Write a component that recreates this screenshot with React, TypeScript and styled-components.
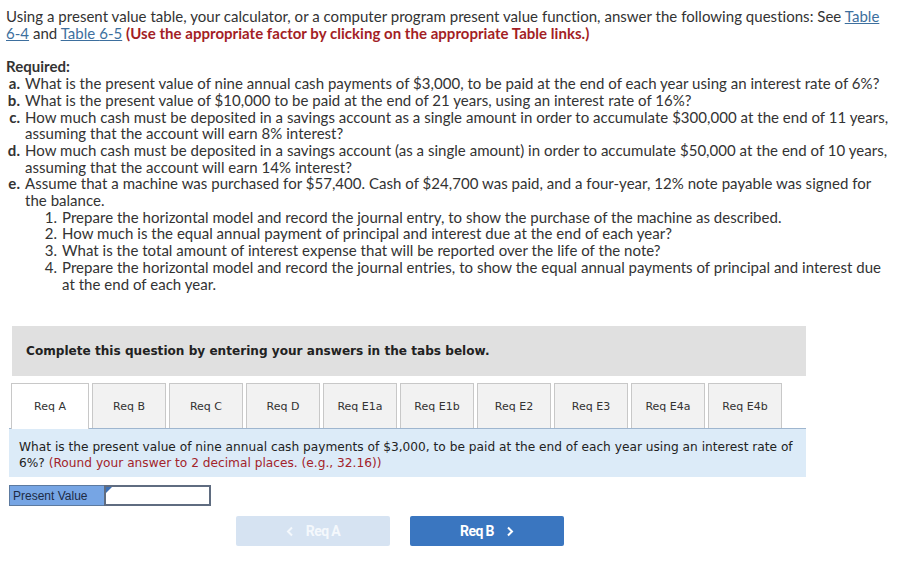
import React from 'react';
import styled, { createGlobalStyle } from 'styled-components';

const GlobalStyle = createGlobalStyle`
  body {
    margin: 0;
    background: #fff;
  }
`;

const Page = styled.div`
  width: 902px;
  padding: 8px 0 0 6px;
  box-sizing: border-box;
`;

const Prose = styled.div`
  font-family: Lato, 'Open Sans', sans-serif;
  font-size: 15px;
  letter-spacing: 0.03px;
  line-height: 16.7px;
  color: #333;
  padding-right: 6px;
`;

const Para = styled.p`
  margin: 0 0 17px;
`;

const Link = styled.a`
  color: #3d6f9e;
  text-decoration: underline;
`;

const NoWrap = styled.span`
  white-space: nowrap;
`;

const Note = styled.b`
  color: #a31e25;
`;

const Heading = styled.div`
  font-weight: bold;
`;

const Item = styled.div<{ $indent: number }>`
  display: flex;
  padding-left: ${(p) => p.$indent}px;
`;

const Marker = styled.span<{ $bold?: boolean; $w: number }>`
  flex: none;
  width: ${(p) => p.$w}px;
  box-sizing: border-box;
  text-align: right;
  padding-right: 5px;
  font-weight: ${(p) => (p.$bold ? 'bold' : 'normal')};
`;

const Panel = styled.div`
  margin: 34px 0 0 6px;
  width: 794px;
  height: 50px;
  background: #e0e0e0;
  display: flex;
  align-items: center;
  padding-left: 14px;
  box-sizing: border-box;
  font-family: 'DejaVu Sans', Verdana, sans-serif;
  font-size: 12.1px;
  font-weight: bold;
  color: #222;
`;

const TabRow = styled.div`
  margin: 7px 0 0 3px;
  width: 797px;
  display: flex;
  gap: 3px;
  padding-left: 2px;
  box-sizing: border-box;
  border-bottom: 1px solid #9fb6cf;
`;

const Tab = styled.div<{ $active?: boolean }>`
  width: ${(p) => (p.$active ? 78 : 74)}px;
  box-sizing: border-box;
  border: 1px solid #c8c8c8;
  border-bottom: none;
  background: ${(p) => (p.$active ? '#fff' : '#f2f2f2')};
  margin-bottom: ${(p) => (p.$active ? '-1px' : '0')};
  height: ${(p) => (p.$active ? 46 : 45)}px;
  display: flex;
  align-items: center;
  justify-content: center;
  font-family: 'DejaVu Sans', Verdana, sans-serif;
  font-size: 11px;
  color: #333;
`;

const Question = styled.div`
  margin-left: 3px;
  width: 797px;
  box-sizing: border-box;
  background: #dcebf8;
  padding: 10px 2px 6px 10px;
  font-family: 'DejaVu Sans', Verdana, sans-serif;
  font-size: 12.2px;
  line-height: 16px;
  color: #222;
`;

const Hint = styled.span`
  color: #a3232a;
`;

const AnswerRow = styled.div`
  margin: 8px 0 0 3px;
  display: flex;
  height: 21px;
`;

const Label = styled.div`
  width: 95px;
  box-sizing: border-box;
  background: #76a5e4;
  border: 1px solid #5c7aa0;
  border-right: none;
  display: flex;
  align-items: center;
  padding-left: 3px;
  font-family: 'Liberation Sans', Arial, sans-serif;
  font-size: 12px;
  color: #1d2b45;
`;

const InputBox = styled.div`
  position: relative;
  width: 107px;
  box-sizing: border-box;
  border: 2px solid #5f6c80;
  background: #fff;
`;

const Flag = styled.span`
  position: absolute;
  left: 0;
  top: 0;
  width: 0;
  height: 0;
  border-top: 6px solid #3c6fb4;
  border-right: 6px solid transparent;
`;

const NavRow = styled.div`
  margin: 10px 0 0 230px;
  display: flex;
  gap: 20px;
`;

const NavButton = styled.div<{ $disabled?: boolean }>`
  width: 154px;
  height: 30px;
  border-radius: 2px;
  background: ${(p) => (p.$disabled ? '#d6e3f2' : '#3a76c0')};
  color: ${(p) => (p.$disabled ? '#f4f8fc' : '#fff')};
  display: flex;
  align-items: center;
  justify-content: center;
  gap: 12px;
  font-family: Roboto, 'Liberation Sans', sans-serif;
  font-weight: bold;
  font-size: 14px;
  letter-spacing: -0.6px;
`;

const Chevron: React.FC<{ dir: 'left' | 'right' }> = ({ dir }) => (
  <svg width="8" height="11" viewBox="0 0 8 11">
    <path
      d={dir === 'left' ? 'M6 1.5 L2 5.5 L6 9.5' : 'M2 1.5 L6 5.5 L2 9.5'}
      fill="none"
      stroke="currentColor"
      strokeWidth="2"
    />
  </svg>
);

const tabs = ['Req A', 'Req B', 'Req C', 'Req D', 'Req E1a', 'Req E1b', 'Req E2', 'Req E3', 'Req E4a', 'Req E4b'];

const App: React.FC = () => {
  return (
    <Page>
      <GlobalStyle />
      <Prose>
        <Para>
          Using a present value table, your calculator, or a computer program present value function, answer the
          following questions: See <Link>Table <NoWrap>6-4</NoWrap></Link> and <Link>Table <NoWrap>6-5</NoWrap></Link>{' '}
          <Note>(Use the appropriate factor by clicking on the appropriate Table links.)</Note>
        </Para>
        <Heading>Required:</Heading>
        <Item $indent={0}>
          <Marker $bold $w={19}>a.</Marker>
          <span>What is the present value of nine annual cash payments of $3,000, to be paid at the end of each year using an interest rate of 6%?</span>
        </Item>
        <Item $indent={0}>
          <Marker $bold $w={19}>b.</Marker>
          <span>What is the present value of $10,000 to be paid at the end of 21 years, using an interest rate of 16%?</span>
        </Item>
        <Item $indent={0}>
          <Marker $bold $w={19}>c.</Marker>
          <span>How much cash must be deposited in a savings account as a single amount in order to accumulate $300,000 at the end of 11 years, assuming that the account will earn 8% interest?</span>
        </Item>
        <Item $indent={0}>
          <Marker $bold $w={19}>d.</Marker>
          <span>How much cash must be deposited in a savings account (as a single amount) in order to accumulate $50,000 at the end of 10 years, assuming that the account will earn 14% interest?</span>
        </Item>
        <Item $indent={0}>
          <Marker $bold $w={19}>e.</Marker>
          <span>Assume that a machine was purchased for $57,400. Cash of $24,700 was paid, and a four-year, 12% note payable was signed for the balance.</span>
        </Item>
        <Item $indent={38}>
          <Marker $w={18}>1.</Marker>
          <span>Prepare the horizontal model and record the journal entry, to show the purchase of the machine as described.</span>
        </Item>
        <Item $indent={38}>
          <Marker $w={18}>2.</Marker>
          <span>How much is the equal annual payment of principal and interest due at the end of each year?</span>
        </Item>
        <Item $indent={38}>
          <Marker $w={18}>3.</Marker>
          <span>What is the total amount of interest expense that will be reported over the life of the note?</span>
        </Item>
        <Item $indent={38}>
          <Marker $w={18}>4.</Marker>
          <span>Prepare the horizontal model and record the journal entries, to show the equal annual payments of principal and interest due at the end of each year.</span>
        </Item>
      </Prose>

      <Panel>Complete this question by entering your answers in the tabs below.</Panel>

      <TabRow>
        {tabs.map((t, i) => (
          <Tab key={t} $active={i === 0}>
            {t}
          </Tab>
        ))}
      </TabRow>

      <Question>
        What is the present value of nine annual cash payments of $3,000, to be paid at the end of each year using an
        interest rate of 6%? <Hint>(Round your answer to 2 decimal places. (e.g., 32.16))</Hint>
      </Question>

      <AnswerRow>
        <Label>Present Value</Label>
        <InputBox>
          <Flag />
        </InputBox>
      </AnswerRow>

      <NavRow>
        <NavButton $disabled>
          <Chevron dir="left" />
          Req A
        </NavButton>
        <NavButton>
          Req B
          <Chevron dir="right" />
        </NavButton>
      </NavRow>
    </Page>
  );
};

export default App;
